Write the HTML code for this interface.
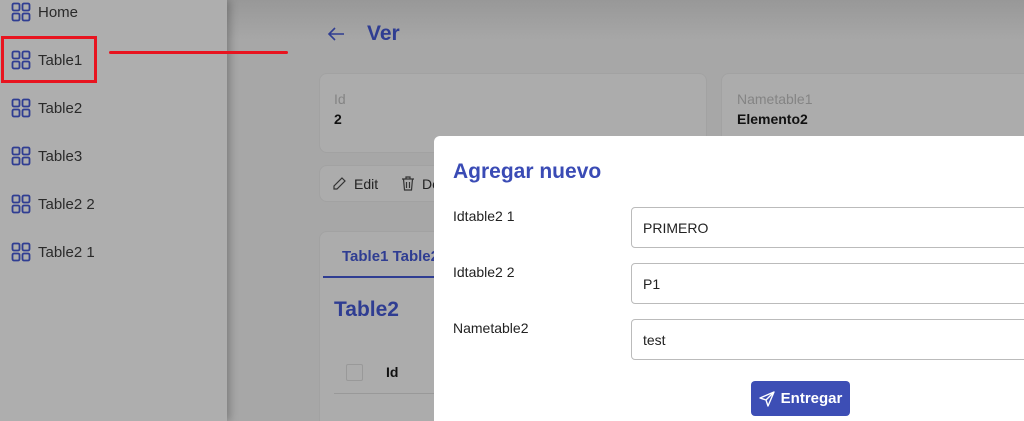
<!DOCTYPE html>
<html style="width:1024px;height:421px;overflow:hidden"><head><style>
*{box-sizing:border-box;margin:0;padding:0}
body{width:1024px;height:421px;overflow:hidden;position:relative;background:#a7a7a7;font-family:"Liberation Sans",sans-serif;}
.main-shade{position:absolute;left:227px;top:0;right:0;height:40px;background:linear-gradient(#989898,#a7a7a7)}
.side{position:absolute;left:0;top:0;width:227px;height:421px;background:#aeaeae;box-shadow:3px 0 8px rgba(0,0,0,.25)}
.item{position:absolute;left:11px;font-size:15px;color:#2a2a2a;display:flex;align-items:center;gap:7px}
.item svg{width:20px;height:20px}
.hl{position:absolute;left:1px;top:36px;width:96px;height:47px;border:3px solid #e8141f}
.redline{position:absolute;left:109px;top:51px;width:179px;height:3px;background:#e8141f;border-radius:2px}
.card{position:absolute;background:#acacac;border:1px solid #a2a2a2;border-radius:8px;overflow:hidden}
.lbl{font-size:14px;color:#848484}
.val{font-size:14px;color:#111;font-weight:bold}
.modal{position:absolute;left:434px;top:136px;width:590px;height:285px;background:#fff;border-radius:6px 0 0 0}
.modal h2{position:absolute;left:19px;top:24px;font-size:21px;color:#3a4bb5;font-weight:bold}
.fl{position:absolute;left:19px;font-size:14px;color:#222}
.inp{position:absolute;left:197px;width:420px;height:41px;border:1px solid #bbb;border-radius:4px;font-size:14px;color:#222;padding:12px 11px}
.btn{position:absolute;left:317px;top:245px;width:99px;height:35px;background:#3d4eb5;border-radius:4px;color:#fff;font-weight:bold;font-size:15px;display:flex;align-items:center;justify-content:center;gap:6px}
</style></head><body>
<div class="main-shade"></div>
<div class="side">
<div class="hl"></div>
</div>
<svg width="0" height="0" style="position:absolute"><defs><g id="g"><rect x="1.5" y="1.5" width="7" height="7" rx="1.5" fill="none" stroke="#2f3d92" stroke-width="1.8"/><rect x="11.5" y="1.5" width="7" height="7" rx="1.5" fill="none" stroke="#2f3d92" stroke-width="1.8"/><rect x="1.5" y="11.5" width="7" height="7" rx="1.5" fill="none" stroke="#2f3d92" stroke-width="1.8"/><rect x="11.5" y="11.5" width="7" height="7" rx="1.5" fill="none" stroke="#2f3d92" stroke-width="1.8"/></g></defs></svg>
<div class="item" style="top:2px"><svg viewBox="0 0 20 20"><use href="#g"/></svg>Home</div>
<div class="item" style="top:50px"><svg viewBox="0 0 20 20"><use href="#g"/></svg>Table1</div>
<div class="item" style="top:98px"><svg viewBox="0 0 20 20"><use href="#g"/></svg>Table2</div>
<div class="item" style="top:146px"><svg viewBox="0 0 20 20"><use href="#g"/></svg>Table3</div>
<div class="item" style="top:194px"><svg viewBox="0 0 20 20"><use href="#g"/></svg>Table2 2</div>
<div class="item" style="top:242px"><svg viewBox="0 0 20 20"><use href="#g"/></svg>Table2 1</div>
<div class="redline"></div>

<svg style="position:absolute;left:327px;top:26px" width="18" height="16" viewBox="0 0 18 16"><path d="M17 8H2M8 2L2 8l6 6" fill="none" stroke="#2f3d92" stroke-width="1.6"/></svg>
<div style="position:absolute;left:367px;top:22px;font-size:21px;font-weight:bold;color:#2f3d92">Ver</div>

<div class="card" style="left:319px;top:73px;width:388px;height:80px"><div class="lbl" style="position:absolute;left:14px;top:17px">Id</div><div class="val" style="position:absolute;left:14px;top:37px">2</div></div>
<div class="card" style="left:721px;top:73px;width:320px;height:80px"><div class="lbl" style="position:absolute;left:15px;top:17px">Nametable1</div><div class="val" style="position:absolute;left:15px;top:37px">Elemento2</div></div>

<div class="card" style="left:319px;top:165px;width:300px;height:37px">
<svg style="position:absolute;left:11px;top:10px" width="16" height="16" viewBox="0 0 16 16"><path d="M11 2l3 3-8 8H3v-3z" fill="none" stroke="#333" stroke-width="1.2"/></svg>
<div style="position:absolute;left:34px;top:10px;font-size:14px;color:#222">Edit</div>
<svg style="position:absolute;left:80px;top:9px" width="16" height="17" viewBox="0 0 16 17"><path d="M2 4h12M6 4V2h4v2M3.5 4l1 11h7l1-11M6.5 7v6M9.5 7v6" fill="none" stroke="#333" stroke-width="1.2"/></svg>
<div style="position:absolute;left:102px;top:10px;font-size:14px;color:#222">De</div>
</div>

<div class="card" style="left:319px;top:231px;width:300px;height:200px">
<div style="position:absolute;left:22px;top:16px;font-size:15px;font-weight:bold;color:#2f3d92">Table1 Table2</div>
<div style="position:absolute;left:3px;top:44px;width:120px;height:2px;background:#2f3d92"></div>
<div style="position:absolute;left:14px;top:66px;font-size:21px;font-weight:bold;color:#2f3d92">Table2</div>
<div style="position:absolute;left:26px;top:132px;width:17px;height:17px;border:1px solid #999;border-radius:2px"></div>
<div style="position:absolute;left:66px;top:132px;font-size:14px;font-weight:bold;color:#111">Id</div>
<div style="position:absolute;left:14px;top:161px;width:120px;height:1px;background:#999"></div>
</div>

<div class="modal">
<h2>Agregar nuevo</h2>
<div class="fl" style="top:72px">Idtable2 1</div>
<div class="fl" style="top:128px">Idtable2 2</div>
<div class="fl" style="top:184px">Nametable2</div>
<div class="inp" style="top:71px">PRIMERO</div>
<div class="inp" style="top:127px">P1</div>
<div class="inp" style="top:183px">test</div>
<div class="btn"><svg width="16" height="16" viewBox="0 0 16 16"><path d="M15 1L1 7l6 2 2 6zM15 1L7 9" fill="none" stroke="#fff" stroke-width="1.4" stroke-linejoin="round"/></svg>Entregar</div>
</div>
</body></html>
